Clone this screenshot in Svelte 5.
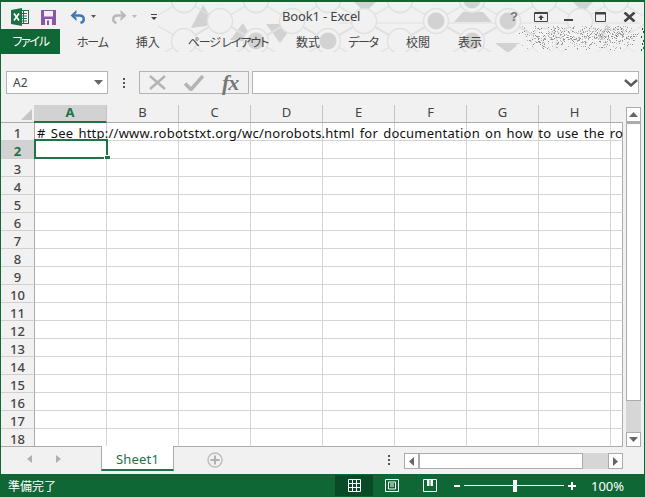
<script>
  const tabs = ['ホーム', '挿入', 'ページ レイアウト', '数式', 'データ', '校閲', '表示'];
  const isKana = (t) => /[ァ-ヶ]/.test(t);
  const cols = ['A', 'B', 'C', 'D', 'E', 'F', 'G', 'H'];
  const rows = Array.from({ length: 18 }, (_, i) => i + 1);
  const cellText = '# See http://www.robotstxt.org/wc/norobots.html for documentation on how to use the ro';

  // decorative hexagon lattice behind the title bar
  const nodes = [];
  for (let k = 0; k < 3; k++) {
    for (let x = k === 1 ? 220 : 184; x < 650; x += 72) nodes.push({ x, y: k === 0 ? 0 : k === 1 ? 21 : 41 });
  }
  const solid = new Set(['328,41', '472,41', '436,21', '508,21', '472,0', '256,41']);
  const lines = [];
  for (const n of nodes) {
    lines.push(`M${n.x - 36} ${n.y + 21}L${n.x} ${n.y}L${n.x + 36} ${n.y + 21}`);
    lines.push(`M${n.x - 36} ${n.y - 21}L${n.x} ${n.y}L${n.x + 36} ${n.y - 21}`);
  }
  lines.push('M340 23H640');
  const polys = [
    '203,5 214,22 206,26 191,28',
    '243,23 230,40 254,42',
    '266,24 294,24 280,43',
    '354,2 376,2 365,12',
    '463,12 483,12 492,22 454,22',
    '495,43 520,43 508,53',
    '573,2 593,2 583,12',
    '607,24 596,40 618,40'
  ];

  // dithered fade at the right end of the tab row
  let seed = 12345;
  const rnd = () => ((seed = (seed * 16807) % 2147483647) / 2147483647);
  const specks = [];
  for (let y = 26; y < 52; y++) {
    for (let x = 518; x < 641; x++) {
      const dy = Math.abs(y - 36) / 15;
      const dx = x < 540 ? (540 - x) / 22 : x > 625 ? (x - 625) / 16 : 0;
      const p = Math.max(0, 0.62 * (1 - dy) * (1 - dx));
      const r = rnd();
      if (r < p * 0.55) specks.push({ x, y, f: r < p * 0.22 ? '#8c8c8c' : '#b4b4b4' });
      else if (r < p) specks.push({ x, y, f: '#f7f7f7' });
    }
  }
  const greens = [[642, 28], [643, 31], [641, 36], [643, 40], [642, 43], [643, 47], [641, 49]];
</script>

<div class="window">
  <header class="ribbon">
    <svg class="pattern" width="645" height="52" viewBox="0 2 645 52" aria-hidden="true">
      <defs>
        <clipPath id="art"><rect x="158" y="2" width="486" height="50" /></clipPath>
      </defs>
      <g clip-path="url(#art)">
        {#each polys as p}<polygon points={p} fill="#d2d2d2" />{/each}
        <path d={lines.join('')} fill="none" stroke="#e0e0e0" stroke-width="1.2" />
        {#each nodes as n}
          <circle cx={n.x} cy={n.y} r="12.5" fill="#f1f1f1" stroke="#e0e0e0" stroke-width="1.4" />
          {#if solid.has(n.x + ',' + n.y)}<circle cx={n.x} cy={n.y} r="8.5" fill="#d2d2d2" />{/if}
        {/each}
      </g>
      <rect x="516" y="44" width="128" height="10" fill="#f1f1f1" opacity="0.55" />
      {#each specks as s}<rect x={s.x} y={s.y} width="1" height="1" fill={s.f} />{/each}
      {#each greens as g}<rect x={g[0]} y={g[1]} width="1" height="2" fill="#0f6735" />{/each}
    </svg>

    <div class="titlebar">
      <div class="qat">
        <svg class="ic-excel" width="18" height="18" viewBox="0 0 18 18">
          <rect x="8" y="2.5" width="9.5" height="13" fill="#fff" stroke="#1d7044" />
          <path d="M10 5.5h6M10 8h6M10 10.5h6M10 13h6M12.5 3v12" stroke="#1d7044" />
          <path d="M0 2L11 0V18L0 16Z" fill="#1d7044" />
          <path d="M3 5.5L8 12.5M8 5.5L3 12.5" stroke="#fff" stroke-width="1.7" />
        </svg>
        <svg class="ic-save" width="15" height="15" viewBox="0 0 15 15">
          <rect width="15" height="15" fill="#8a57a8" />
          <rect x="3" y="1" width="9" height="5.5" fill="#f3eef6" />
          <rect x="4" y="9" width="7" height="6" fill="#f3eef6" />
          <rect x="6" y="10.5" width="2" height="4.5" fill="#8a57a8" />
        </svg>
        <svg class="ic-undo" width="16" height="14" viewBox="0 0 16 14">
          <path d="M2 5.5H9.5C14.5 5.5 15.5 11.5 10.5 13" fill="none" stroke="#3e78b4" stroke-width="2.4" />
          <path d="M6.5 0L0.5 5.5L6.5 11V8L3.5 5.5L6.5 3Z" fill="#3e78b4" />
        </svg>
        <svg class="caret-s" width="5" height="3" viewBox="0 0 5 3"><path d="M0 0H5L2.5 3Z" fill="#555" /></svg>
        <svg class="ic-redo" width="16" height="14" viewBox="0 0 16 14">
          <path d="M14 5.5H6.5C1.5 5.5 0.5 11.5 5.5 13" fill="none" stroke="#b8b8b8" stroke-width="2.4" />
          <path d="M9.5 0L15.5 5.5L9.5 11V8L12.5 5.5L9.5 3Z" fill="#b8b8b8" />
        </svg>
        <svg class="caret-s" width="5" height="3" viewBox="0 0 5 3"><path d="M0 0H5L2.5 3Z" fill="#bbb" /></svg>
        <svg class="ic-custom" width="6" height="6" viewBox="0 0 6 6"><path d="M0 0H6V1H0ZM0 3H6L3 6Z" fill="#444" /></svg>
      </div>
      <div class="title">Book1 - Excel</div>
      <div class="winbtns">
        <span class="help">?</span>
        <svg class="wb-opts" width="14" height="10" viewBox="0 0 14 10">
          <path d="M.5 .5H13.5V9.5H.5Z" fill="none" stroke="#444" />
          <path d="M1 1.5H13" stroke="#444" />
          <path d="M7 3L4 6H6V8H8V6H10Z" fill="#444" />
        </svg>
        <span class="wb-min"></span>
        <svg class="wb-max" width="11" height="10" viewBox="0 0 11 10">
          <path d="M.5 .5H10.5V9.5H.5Z" fill="none" stroke="#444" />
          <path d="M0 1.5H11" stroke="#444" stroke-width="2" />
        </svg>
        <svg class="wb-close" width="13" height="10" viewBox="0 0 13 10">
          <path d="M1.5 .5L11.5 9.5M11.5 .5L1.5 9.5" stroke="#444" stroke-width="2.6" />
        </svg>
      </div>
    </div>

    <nav class="tabs">
      <div class="file">ファイル</div>
      {#each tabs as t}<div class="tab" class:kana={isKana(t)}>{t}</div>{/each}
    </nav>
  </header>

  <section class="formula">
    <div class="namebox">
      <span>A2</span>
      <svg width="9" height="5" viewBox="0 0 9 5"><path d="M0 0H9L4.5 5Z" fill="#666" /></svg>
    </div>
    <div class="fdots"><i></i><i></i><i></i></div>
    <div class="fxbox">
      <svg class="ic-x" width="17" height="15" viewBox="0 0 17 15">
        <path d="M1 1L16 14M16 1L1 14" stroke="#b4b4b4" stroke-width="2.4" />
      </svg>
      <svg class="ic-ok" width="20" height="16" viewBox="0 0 20 16">
        <path d="M1 8.5L7 14.5L19 1" fill="none" stroke="#b4b4b4" stroke-width="3.6" />
      </svg>
      <span class="fx">fx</span>
    </div>
    <div class="finput">
      <svg width="14" height="8" viewBox="0 0 14 8">
        <path d="M1 1L7 6.5L13 1" fill="none" stroke="#5a5a5a" stroke-width="2.4" />
      </svg>
    </div>
  </section>

  <main class="main">
    <div class="sheet">
      <div class="head">
        <div class="corner"><svg width="11" height="11" viewBox="0 0 11 11"><path d="M11 0V11H0Z" fill="#c6c6c6" /></svg></div>
        {#each cols as c, i}<div class="ch" class:active={i === 0}>{c}</div>{/each}
        <div class="ch partial"></div>
      </div>
      {#each rows as r}
        <div class="row" class:last={r === 18}>
          <div class="rh" class:active={r === 2}>{r}</div>
          {#each cols as c}<div class="cell"></div>{/each}
          <div class="cell partial"></div>
          {#if r === 1}<div class="celltext">{cellText}</div>{/if}
          {#if r === 2}<div class="selection"><span class="handle"></span></div>{/if}
        </div>
      {/each}
    </div>
    <div class="vscroll">
      <div class="sbtn"><svg width="9" height="5" viewBox="0 0 9 5"><path d="M4.5 0L9 5H0Z" fill="#666" /></svg></div>
      <div class="vthumb"></div>
      <div class="vtrack"></div>
      <div class="sbtn"><svg width="9" height="5" viewBox="0 0 9 5"><path d="M0 0H9L4.5 5Z" fill="#666" /></svg></div>
    </div>
  </main>

  <section class="sheetbar">
    <div class="navs">
      <svg width="5" height="8" viewBox="0 0 5 8"><path d="M5 0V8L0 4Z" fill="#b0b0b0" /></svg>
      <svg width="5" height="8" viewBox="0 0 5 8"><path d="M0 0V8L5 4Z" fill="#b0b0b0" /></svg>
    </div>
    <div class="sheettab">Sheet1</div>
    <svg class="plus" width="16" height="16" viewBox="0 0 16 16">
      <circle cx="8" cy="8" r="7" fill="none" stroke="#bcbcbc" stroke-width="1.4" />
      <path d="M8 3.5V12.5M3.5 8H12.5" stroke="#b0b0b0" stroke-width="2" />
    </svg>
    <div class="bdots"><i></i><i></i><i></i></div>
    <div class="hscroll">
      <div class="hbtn"><svg width="5" height="9" viewBox="0 0 5 9"><path d="M5 0V9L0 4.5Z" fill="#666" /></svg></div>
      <div class="hthumb"></div>
      <div class="htrack"></div>
      <div class="hbtn"><svg width="5" height="9" viewBox="0 0 5 9"><path d="M0 0V9L5 4.5Z" fill="#666" /></svg></div>
    </div>
  </section>

  <footer class="status">
    <span class="ready">準備完了</span>
    <div class="view on">
      <svg width="13" height="13" viewBox="0 0 13 13">
        <path d="M.5 .5H12.5V12.5H.5ZM.5 4.5H12.5M.5 8.5H12.5M4.5 .5V12.5M8.5 .5V12.5" fill="none" stroke="#fff" />
      </svg>
    </div>
    <div class="view">
      <svg width="14" height="13" viewBox="0 0 14 13">
        <path d="M.5 .5H13.5V12.5H.5Z" fill="none" stroke="#fff" />
        <path d="M3.5 3H10.5V10H3.5ZM5 5H9M5 7H9" fill="none" stroke="#fff" />
      </svg>
    </div>
    <div class="view">
      <svg width="14" height="13" viewBox="0 0 14 13">
        <path d="M.5 .5H13.5V12.5H.5Z" fill="none" stroke="#fff" />
        <path d="M4 1H6.5V7H4ZM7.5 1H10V7H7.5Z" fill="#fff" />
      </svg>
    </div>
    <span class="zminus"></span>
    <div class="slider"><span class="sthumb"></span></div>
    <span class="zplus"></span>
    <span class="zoomval">100%</span>
  </footer>
</div>

<style>
  :global(body) {
    margin: 0;
    background: #f1f1f1;
  }

  .window {
    box-sizing: border-box;
    width: 645px;
    height: 497px;
    display: flex;
    flex-direction: column;
    overflow: hidden;
    background: #f1f1f1;
    border: 1px solid #0f6735;
    border-top-width: 2px;
    border-bottom: 0;
    font-family: "Noto Sans", "Noto Sans CJK JP", sans-serif;
    color: #444;
  }

  .ribbon {
    position: relative;
    height: 52px;
    flex: none;
  }

  .pattern {
    position: absolute;
    left: -1px;
    top: 0;
  }

  .titlebar {
    position: relative;
    display: flex;
    align-items: center;
    height: 27px;
  }

  .qat {
    display: flex;
    align-items: center;
    padding-left: 10px;
    width: 281px;
    box-sizing: border-box;
    flex: none;
  }

  .ic-excel {
    margin-top: 3px;
  }

  .ic-save {
    margin: 3px 0 0 12px;
  }

  .ic-undo {
    margin: 2px 0 0 14px;
  }

  .caret-s {
    margin: 2px 0 0 5px;
  }

  .ic-redo {
    margin: 2px 0 0 15px;
  }

  .ic-custom {
    margin: 3px 0 0 14px;
  }

  .title {
    font-size: 13px;
    line-height: 24px;
    letter-spacing: -0.15px;
    white-space: nowrap;
    color: #444;
    width: 228px;
    flex: none;
  }

  .winbtns {
    display: flex;
    align-items: center;
    margin-top: 2px;
  }

  .help {
    font: bold 13px/14px "Liberation Sans", sans-serif;
    color: #777;
    width: 8px;
  }

  .wb-opts {
    margin-left: 16px;
  }

  .wb-min {
    width: 9px;
    height: 2px;
    margin: 6px 0 0 16px;
    background: #444;
  }

  .wb-max {
    margin-left: 22px;
  }

  .wb-close {
    margin-left: 17px;
  }

  .tabs {
    position: relative;
    display: flex;
    height: 25px;
    align-items: stretch;
    font-feature-settings: "palt";
  }

  .file {
    width: 59px;
    margin-right: 3px;
    background: #0f6735;
    color: #fff;
    font-size: 12px;
    line-height: 26px;
    letter-spacing: -1.3px;
    text-align: center;
  }

  .tab {
    padding: 0 14px;
    font-size: 12px;
    line-height: 27px;
    color: #444;
    white-space: nowrap;
  }

  .tab.kana {
    letter-spacing: -1.2px;
  }

  .formula {
    display: flex;
    align-items: stretch;
    height: 23px;
    padding: 17px 5px 11px 5px;
    flex: none;
  }

  .namebox,
  .fxbox,
  .finput {
    box-sizing: border-box;
    border: 1px solid #b4b4b4;
    background: #fff;
    display: flex;
    align-items: center;
  }

  .namebox {
    width: 102px;
    padding: 0 4px 0 6px;
    justify-content: space-between;
    font-size: 12px;
    background: #fff;
  }

  .fdots {
    width: 31px;
    display: flex;
    flex-direction: column;
    align-items: center;
    justify-content: center;
    gap: 2px;
    flex: none;
  }

  .fdots i,
  .bdots i {
    width: 2px;
    height: 2px;
    background: #555;
    display: block;
  }

  .fxbox {
    width: 110px;
    background: #f1f1f1;
    position: relative;
  }

  .ic-x {
    margin-left: 9px;
  }

  .ic-ok {
    margin-left: 18px;
  }

  .fx {
    margin-left: 18px;
    font: italic bold 22px/22px "Liberation Serif", serif;
    color: #777;
    letter-spacing: -1px;
  }

  .finput {
    flex: 1;
    margin-left: 3px;
    justify-content: flex-end;
    padding-right: 0;
    margin-right: 0;
  }

  .main {
    display: flex;
    height: 342px;
    flex: none;
  }

  .sheet {
    width: 622px;
    flex: none;
  }

  .head {
    display: flex;
    height: 18px;
    box-sizing: border-box;
    border-bottom: 1px solid #ababab;
  }

  .corner {
    width: 34px;
    flex: none;
    display: flex;
    padding: 4px 0 0 20px;
    box-sizing: border-box;
  }

  .ch {
    box-sizing: border-box;
    width: 72px;
    flex: none;
    border-right: 1px solid #c4c4c4;
    font-size: 13px;
    line-height: 15px;
    text-align: center;
    color: #444;
  }

  .ch.partial {
    width: 12px;
    border-right: 0;
  }

  .ch.active {
    background: #d2d2d2;
    color: #217346;
    font-weight: 700;
    height: 18px;
    margin-left: -1px;
    width: 73px;
    border-bottom: 2px solid #217346;
  }

  .row {
    position: relative;
    display: flex;
    height: 18px;
  }

  .rh {
    box-sizing: border-box;
    width: 34px;
    flex: none;
    border-right: 1px solid #ababab;
    border-bottom: 1px solid #d0d0d0;
    font-size: 13px;
    line-height: 21px;
    text-align: center;
    color: #444;
    font-weight: 500;
  }

  .rh.active {
    background: #d2d2d2;
    color: #217346;
    font-weight: 700;
  }

  .cell {
    box-sizing: border-box;
    width: 72px;
    flex: none;
    background: #fff;
    border-right: 1px solid #d4d4d4;
    border-bottom: 1px solid #d4d4d4;
  }

  .cell.partial {
    width: 12px;
    border-right: 1px solid #ababab;
  }

  .row.last .rh,
  .row.last .cell {
    border-bottom-color: #ababab;
  }

  .celltext {
    position: absolute;
    left: 36px;
    top: 0;
    height: 18px;
    white-space: nowrap;
    font-size: 13px;
    line-height: 20px;
    color: #111;
    letter-spacing: 0.24px;
    word-spacing: 1.5px;
  }

  .selection {
    position: absolute;
    left: 33px;
    top: -2px;
    width: 74px;
    height: 20px;
    box-sizing: border-box;
    border: 2px solid #217346;
  }

  .handle {
    position: absolute;
    right: -4px;
    bottom: -4px;
    width: 5px;
    height: 5px;
    background: #217346;
    border: 1px solid #fff;
    border-right: 0;
    border-bottom: 0;
  }

  .vscroll {
    display: flex;
    flex-direction: column;
    width: 15px;
    height: 340px;
    margin: 2px 0 0 3px;
    flex: none;
  }

  .sbtn {
    box-sizing: border-box;
    height: 15px;
    border: 1px solid #ababab;
    background: #fff;
    display: flex;
    align-items: center;
    justify-content: center;
    flex: none;
  }

  .vthumb {
    box-sizing: border-box;
    height: 279px;
    background: #fff;
    border: 1px solid #ababab;
    border-top-width: 2px;
    flex: none;
  }

  .vtrack {
    flex: 1;
    background: #d6d6d6;
  }

  .sheetbar {
    display: flex;
    align-items: flex-start;
    height: 27px;
    flex: none;
  }

  .navs {
    width: 100px;
    flex: none;
    display: flex;
    gap: 24px;
    padding: 8px 0 0 26px;
    box-sizing: border-box;
  }

  .sheettab {
    box-sizing: border-box;
    width: 73px;
    height: 25px;
    margin-top: -1px;
    position: relative;
    background: #fff;
    border: 1px solid #ababab;
    border-top: 0;
    border-bottom: 2px solid #217346;
    color: #217346;
    font-size: 13px;
    line-height: 27px;
    letter-spacing: 0.2px;
    text-align: center;
    flex: none;
  }

  .plus {
    margin: 5px 0 0 33px;
    flex: none;
  }

  .bdots {
    display: flex;
    flex-direction: column;
    gap: 2px;
    margin: 8px 0 0 165px;
    flex: none;
  }

  .hscroll {
    display: flex;
    width: 219px;
    height: 16px;
    margin: 6px 0 0 14px;
    flex: none;
  }

  .hbtn {
    box-sizing: border-box;
    width: 15px;
    border: 1px solid #ababab;
    background: #fff;
    display: flex;
    align-items: center;
    justify-content: center;
    flex: none;
  }

  .hthumb {
    box-sizing: border-box;
    width: 164px;
    background: #fff;
    border: 1px solid #ababab;
    border-left-width: 1px;
    flex: none;
  }

  .htrack {
    flex: 1;
    background: #d6d6d6;
  }

  .status {
    display: flex;
    align-items: center;
    height: 23px;
    flex: none;
    margin: 0 -1px;
    background: #0f6735;
    color: #fff;
    font-size: 12px;
  }

  .ready {
    margin-left: 8px;
    width: 327px;
    flex: none;
  }

  .view {
    box-sizing: border-box;
    width: 38px;
    height: 21px;
    display: flex;
    align-items: center;
    justify-content: center;
    flex: none;
  }

  .view.on {
    background: #0a4a26;
  }

  .zminus {
    width: 6px;
    height: 2px;
    background: #fff;
    margin-left: 5px;
  }

  .slider {
    position: relative;
    width: 100px;
    height: 1px;
    background: #fff;
    margin-left: 4px;
  }

  .sthumb {
    position: absolute;
    left: 49px;
    top: -5px;
    width: 4px;
    height: 12px;
    background: #fff;
  }

  .zplus {
    position: relative;
    width: 8px;
    height: 2px;
    background: #fff;
    margin-left: 4px;
  }

  .zplus::after {
    content: "";
    position: absolute;
    left: 3px;
    top: -3px;
    width: 2px;
    height: 8px;
    background: #fff;
  }

  .zoomval {
    margin-left: 15px;
    font-size: 13px;
  }
</style>
